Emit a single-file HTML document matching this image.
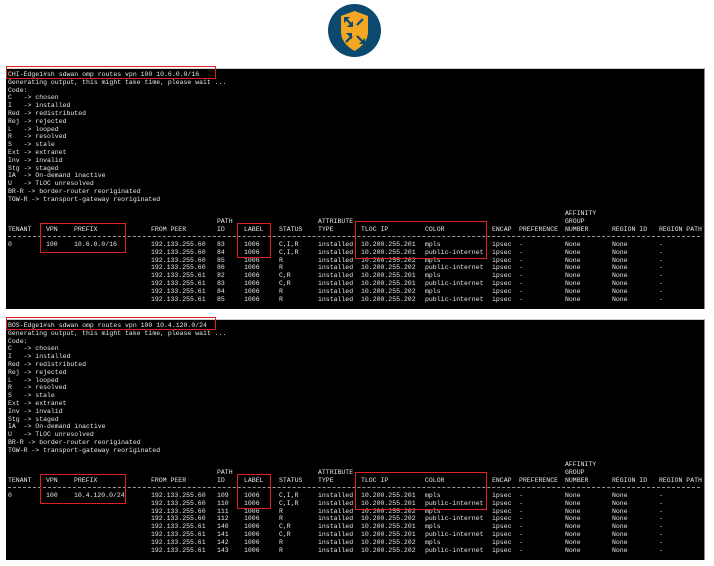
<!DOCTYPE html>
<html><head><meta charset="utf-8"><style>
*{margin:0;padding:0;box-sizing:border-box}
body{width:714px;height:566px;background:#fff;position:relative;overflow:hidden;font-family:"Liberation Mono",monospace}
.t{position:absolute;left:6px;width:699px;height:241px;background:#000;border-right:1px solid #888;border-top:1px solid #ccc}
.t span,.t div.l{position:absolute;color:#e8e8e8;font-size:6.5px;line-height:7.8px;white-space:pre}
.code{position:absolute;left:2px;top:2px;color:#e8e8e8;font-size:6.5px;line-height:7.8px;white-space:pre}
.dash{position:absolute;left:2px;right:4px;top:167px;border-top:1px dashed #999}
.r{position:absolute;border:1.5px solid #e02020}
</style></head><body>
<svg style="position:absolute;left:327px;top:3px" width="55" height="55" viewBox="0 0 55 55">
<circle cx="27.5" cy="27.5" r="26.5" fill="#0b4a6e"/>
<path d="M14 13 L27.5 8 L41 13 L41 29 Q41 40 27.5 48 Q14 40 14 29 Z" fill="#f5a623"/>
<g stroke="#0b4a6e" stroke-width="2.2">
<line x1="19" y1="16" x2="25" y2="22"/><line x1="36" y1="16" x2="30" y2="22"/>
<line x1="25" y1="33" x2="19" y2="39"/><line x1="30" y1="33" x2="36" y2="39"/>
</g>
<g fill="#0b4a6e">
<polygon points="17,14 23,14 17,20"/><polygon points="26,24 26,18 20,24"/>
<polygon points="24,31 24,37 18,31" transform="translate(1,-1)"/><polygon points="38,41 38,35 32,41"/>
</g>
</svg>

<div class="t" style="top:68px">
<div class="code">CHI-Edge1#sh sdwan omp routes vpn 100 10.6.0.0/16
Generating output, this might take time, please wait ...
Code:
C   -> chosen
I   -> installed
Red -> redistributed
Rej -> rejected
L   -> looped
R   -> resolved
S   -> stale
Ext -> extranet
Inv -> invalid
Stg -> staged
IA  -> On-demand inactive
U   -> TLOC unresolved
BR-R -> border-router reoriginated
TGW-R -> transport-gateway reoriginated</div>
<span style="left:559px;top:141px">AFFINITY</span>
<span style="left:211px;top:149px">PATH</span><span style="left:312px;top:149px">ATTRIBUTE</span><span style="left:559px;top:149px">GROUP</span>
<span style="left:2px;top:157px">TENANT</span><span style="left:40px;top:157px">VPN</span><span style="left:68px;top:157px">PREFIX</span><span style="left:145px;top:157px">FROM PEER</span><span style="left:211px;top:157px">ID</span><span style="left:238px;top:157px">LABEL</span><span style="left:273px;top:157px">STATUS</span><span style="left:312px;top:157px">TYPE</span><span style="left:355px;top:157px">TLOC IP</span><span style="left:419px;top:157px">COLOR</span><span style="left:486px;top:157px">ENCAP</span><span style="left:513px;top:157px">PREFERENCE</span><span style="left:559px;top:157px">NUMBER</span><span style="left:606px;top:157px">REGION ID</span><span style="left:653px;top:157px">REGION PATH</span>
<div class="dash"></div>
<span style="left:2px;top:172px">0</span><span style="left:40px;top:172px">100</span><span style="left:68px;top:172px">10.6.0.0/16</span>
<span style="left:145px;top:172px">192.133.255.60
192.133.255.60
192.133.255.60
192.133.255.60
192.133.255.61
192.133.255.61
192.133.255.61
192.133.255.61</span>
<span style="left:211px;top:172px">83
84
85
86
82
83
84
85</span>
<span style="left:238px;top:172px">1006
1006
1006
1006
1006
1006
1006
1006</span>
<span style="left:273px;top:172px">C,I,R
C,I,R
R
R
C,R
C,R
R
R</span>
<span style="left:312px;top:172px">installed
installed
installed
installed
installed
installed
installed
installed</span>
<span style="left:355px;top:172px">10.200.255.201
10.200.255.201
10.200.255.202
10.200.255.202
10.200.255.201
10.200.255.201
10.200.255.202
10.200.255.202</span>
<span style="left:419px;top:172px">mpls
public-internet
mpls
public-internet
mpls
public-internet
mpls
public-internet</span>
<span style="left:486px;top:172px">ipsec  -
ipsec  -
ipsec  -
ipsec  -
ipsec  -
ipsec  -
ipsec  -
ipsec  -</span>
<span style="left:559px;top:172px">None
None
None
None
None
None
None
None</span>
<span style="left:606px;top:172px">None
None
None
None
None
None
None
None</span>
<span style="left:653px;top:172px">-
-
-
-
-
-
-
-</span>
</div>

<div class="t" style="top:319px">
<div class="code">BOS-Edge1#sh sdwan omp routes vpn 100 10.4.120.0/24
Generating output, this might take time, please wait ...
Code:
C   -> chosen
I   -> installed
Red -> redistributed
Rej -> rejected
L   -> looped
R   -> resolved
S   -> stale
Ext -> extranet
Inv -> invalid
Stg -> staged
IA  -> On-demand inactive
U   -> TLOC unresolved
BR-R -> border-router reoriginated
TGW-R -> transport-gateway reoriginated</div>
<span style="left:559px;top:141px">AFFINITY</span>
<span style="left:211px;top:149px">PATH</span><span style="left:312px;top:149px">ATTRIBUTE</span><span style="left:559px;top:149px">GROUP</span>
<span style="left:2px;top:157px">TENANT</span><span style="left:40px;top:157px">VPN</span><span style="left:68px;top:157px">PREFIX</span><span style="left:145px;top:157px">FROM PEER</span><span style="left:211px;top:157px">ID</span><span style="left:238px;top:157px">LABEL</span><span style="left:273px;top:157px">STATUS</span><span style="left:312px;top:157px">TYPE</span><span style="left:355px;top:157px">TLOC IP</span><span style="left:419px;top:157px">COLOR</span><span style="left:486px;top:157px">ENCAP</span><span style="left:513px;top:157px">PREFERENCE</span><span style="left:559px;top:157px">NUMBER</span><span style="left:606px;top:157px">REGION ID</span><span style="left:653px;top:157px">REGION PATH</span>
<div class="dash"></div>
<span style="left:2px;top:172px">0</span><span style="left:40px;top:172px">100</span><span style="left:68px;top:172px">10.4.120.0/24</span>
<span style="left:145px;top:172px">192.133.255.60
192.133.255.60
192.133.255.60
192.133.255.60
192.133.255.61
192.133.255.61
192.133.255.61
192.133.255.61</span>
<span style="left:211px;top:172px">109
110
111
112
140
141
142
143</span>
<span style="left:238px;top:172px">1006
1006
1006
1006
1006
1006
1006
1006</span>
<span style="left:273px;top:172px">C,I,R
C,I,R
R
R
C,R
C,R
R
R</span>
<span style="left:312px;top:172px">installed
installed
installed
installed
installed
installed
installed
installed</span>
<span style="left:355px;top:172px">10.200.255.201
10.200.255.201
10.200.255.202
10.200.255.202
10.200.255.201
10.200.255.201
10.200.255.202
10.200.255.202</span>
<span style="left:419px;top:172px">mpls
public-internet
mpls
public-internet
mpls
public-internet
mpls
public-internet</span>
<span style="left:486px;top:172px">ipsec  -
ipsec  -
ipsec  -
ipsec  -
ipsec  -
ipsec  -
ipsec  -
ipsec  -</span>
<span style="left:559px;top:172px">None
None
None
None
None
None
None
None</span>
<span style="left:606px;top:172px">None
None
None
None
None
None
None
None</span>
<span style="left:653px;top:172px">-
-
-
-
-
-
-
-</span>
</div>

<div class="r" style="left:6px;top:66px;width:210px;height:13px"></div>
<div class="r" style="left:40px;top:223px;width:86px;height:30px"></div>
<div class="r" style="left:237px;top:223px;width:34px;height:35px"></div>
<div class="r" style="left:355px;top:221px;width:132px;height:38px"></div>

<div class="r" style="left:6px;top:317px;width:210px;height:13px"></div>
<div class="r" style="left:40px;top:474px;width:86px;height:30px"></div>
<div class="r" style="left:237px;top:474px;width:34px;height:35px"></div>
<div class="r" style="left:355px;top:472px;width:132px;height:38px"></div>
</body></html>
